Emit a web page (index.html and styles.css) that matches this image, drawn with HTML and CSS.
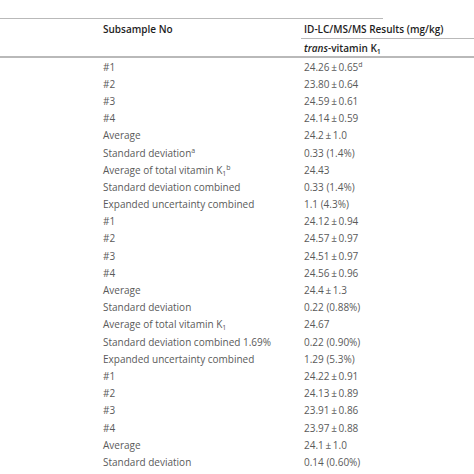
FILE: index.html
```html
<!DOCTYPE html>
<html>
<head>
<meta charset="utf-8">
<link rel="stylesheet" href="styles.css">
</head>
<body>
<div class="top-rule"></div>
<table class="results">
  <thead>
    <tr class="head1">
      <th class="c1">Subsample No</th>
      <th class="c2 under">ID-LC/MS/MS Results (mg/kg)</th>
    </tr>
    <tr class="head2">
      <th class="c1"></th>
      <th class="c2"><i>trans</i>-vitamin K<sub>1</sub></th>
    </tr>
  </thead>
  <tbody>
    <tr><td class="c1">#1</td><td class="c2">24.26&thinsp;±&thinsp;0.65<sup>d</sup></td></tr>
    <tr><td class="c1">#2</td><td class="c2">23.80&thinsp;±&thinsp;0.64</td></tr>
    <tr><td class="c1">#3</td><td class="c2">24.59&thinsp;±&thinsp;0.61</td></tr>
    <tr><td class="c1">#4</td><td class="c2">24.14&thinsp;±&thinsp;0.59</td></tr>
    <tr><td class="c1">Average</td><td class="c2">24.2&thinsp;±&thinsp;1.0</td></tr>
    <tr><td class="c1">Standard deviation<sup>a</sup></td><td class="c2">0.33 (1.4%)</td></tr>
    <tr><td class="c1">Average of total vitamin K<sub>1</sub><sup>b</sup></td><td class="c2">24.43</td></tr>
    <tr><td class="c1">Standard deviation combined</td><td class="c2">0.33 (1.4%)</td></tr>
    <tr><td class="c1">Expanded uncertainty combined</td><td class="c2">1.1 (4.3%)</td></tr>
    <tr><td class="c1">#1</td><td class="c2">24.12&thinsp;±&thinsp;0.94</td></tr>
    <tr><td class="c1">#2</td><td class="c2">24.57&thinsp;±&thinsp;0.97</td></tr>
    <tr><td class="c1">#3</td><td class="c2">24.51&thinsp;±&thinsp;0.97</td></tr>
    <tr><td class="c1">#4</td><td class="c2">24.56&thinsp;±&thinsp;0.96</td></tr>
    <tr><td class="c1">Average</td><td class="c2">24.4&thinsp;±&thinsp;1.3</td></tr>
    <tr><td class="c1">Standard deviation</td><td class="c2">0.22 (0.88%)</td></tr>
    <tr><td class="c1">Average of total vitamin K<sub>1</sub></td><td class="c2">24.67</td></tr>
    <tr><td class="c1">Standard deviation combined 1.69%</td><td class="c2">0.22 (0.90%)</td></tr>
    <tr><td class="c1">Expanded uncertainty combined</td><td class="c2">1.29 (5.3%)</td></tr>
    <tr><td class="c1">#1</td><td class="c2">24.22&thinsp;±&thinsp;0.91</td></tr>
    <tr><td class="c1">#2</td><td class="c2">24.13&thinsp;±&thinsp;0.89</td></tr>
    <tr><td class="c1">#3</td><td class="c2">23.91&thinsp;±&thinsp;0.86</td></tr>
    <tr><td class="c1">#4</td><td class="c2">23.97&thinsp;±&thinsp;0.88</td></tr>
    <tr><td class="c1">Average</td><td class="c2">24.1&thinsp;±&thinsp;1.0</td></tr>
    <tr><td class="c1">Standard deviation</td><td class="c2">0.14 (0.60%)</td></tr>
  </tbody>
</table>
</body>
</html>
```
FILE: styles.css
```css
html, body {
  margin: 0;
  padding: 0;
  background: #ffffff;
  overflow: hidden;
}
body {
  font-family: "Open Sans", "Noto Sans", sans-serif;
  font-size: 10px;
  color: #5a5a5a;
}
.top-rule {
  width: 383px;
  height: 0;
  margin-top: 18px;
  border-top: 1.5px solid #b9b9b9;
}
.results {
  width: 474px;
  border-collapse: collapse;
  table-layout: fixed;
}
.results th,
.results td {
  padding: 0;
  text-align: left;
  white-space: nowrap;
  vertical-align: middle;
}
.results th {
  font-weight: 600;
  color: #1e1e1e;
}
.c1 {
  width: 198px;
  padding-left: 103px !important;
}
.c2 {
  padding-left: 3px !important;
}
.head1 th {
  height: 18px;
  padding-top: 1px !important;
}
.head2 th {
  height: 16px;
  padding-top: 1px !important;
  border-bottom: 2px solid #b9b9b9;
}
.under {
  border-bottom: 1.5px solid #b9b9b9;
}
.results td {
  height: 17.2px;
  line-height: 12px;
}
sub, sup {
  font-size: 7px;
  line-height: 0;
}
sub {
  vertical-align: -2px;
}
sup {
  vertical-align: 4px;
}
```
